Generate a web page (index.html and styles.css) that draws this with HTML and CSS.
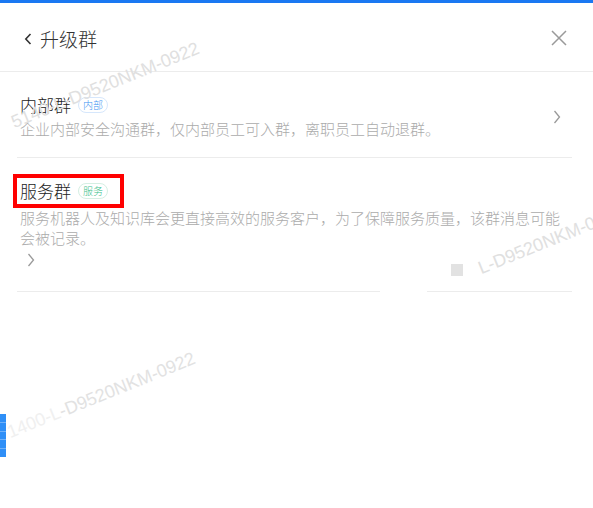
FILE: index.html
```html
<!DOCTYPE html>
<html lang="zh-CN">

<head>
    <meta charset="UTF-8">
    <meta name="viewport" content="width=device-width, initial-scale=1.0">
    <title>升级群</title>
    <link rel="stylesheet" href="styles.css">
</head>

<body>
    <div class="page">
        <div class="topbar"></div>

        <div class="header">
            <div class="header-left">
                <svg class="back" width="8" height="12" viewBox="0 0 8 12">
                    <path d="M6.5 1 L1.8 6 L6.5 11" fill="none" stroke="#333" stroke-width="1.6" />
                </svg>
                <span class="header-title">升级群</span>
            </div>
            <svg class="close" width="16" height="16" viewBox="0 0 16 16">
                <path d="M1 1 L15 15 M15 1 L1 15" fill="none" stroke="#9a9a9a" stroke-width="1.5" />
            </svg>
        </div>

        <div class="list">
            <div class="row row-inner">
                <div class="row-body">
                    <div class="row-title">
                        <span class="name">内部群</span>
                        <span class="tag tag-blue">内部</span>
                    </div>
                    <div class="desc">企业内部安全沟通群，仅内部员工可入群，离职员工自动退群。</div>
                </div>
                <svg class="arrow" width="8" height="14" viewBox="0 0 8 14">
                    <path d="M1.5 1 L6.5 7 L1.5 13" fill="none" stroke="#999" stroke-width="1.3" />
                </svg>
            </div>

            <div class="row row-service">
                <div class="row-title marked">
                    <span class="name">服务群</span>
                    <span class="tag tag-green">服务</span>
                </div>
                <div class="desc">服务机器人及知识库会更直接高效的服务客户，为了保障服务质量，该群消息可能会被记录。</div>
                <svg class="arrow arrow-below" width="8" height="14" viewBox="0 0 8 14">
                    <path d="M1.5 1 L6.5 7 L1.5 13" fill="none" stroke="#999" stroke-width="1.3" />
                </svg>
            </div>
        </div>

        <!-- 水印 -->
        <span class="watermark wm-1">5140-L-D9520NKM-0922</span>
        <span class="watermark wm-2">L-D9520NKM-0922</span>
        <span class="watermark wm-3"><span class="faint">1400-L</span>-D9520NKM-0922</span>
        <span class="wm-dot"></span>
        <span class="line-gap"></span>
        <div class="side-tab">
            <i></i><i></i><i></i><i></i>
        </div>
    </div>
</body>

</html>
```

FILE: styles.css
```css
body {
    margin: 0;
    background: #fff;
    font-family: "Noto Sans CJK SC", "Noto Sans", sans-serif;
    font-weight: 300;
}

.page {
    position: relative;
    width: 593px;
    height: 508px;
    overflow: hidden;
}

.topbar {
    height: 3px;
    background-color: #1a78f2;
}

.header {
    height: 69px;
    display: flex;
    align-items: center;
    justify-content: space-between;
    padding: 0 26px 0 24px;
    border-bottom: 1px solid #ececec;
    box-sizing: border-box;
}

.header-left {
    display: flex;
    align-items: center;
    gap: 8px;
    margin-top: 3px;
}

.header-title {
    font-size: 19px;
    line-height: 24px;
    color: #333;
}

.close {
    margin-top: 2px;
}

.list {
    margin: 0 21px 0 17px;
}

.row {
    border-bottom: 1px solid #ececec;
    padding-left: 3px;
}

.row-inner {
    display: flex;
    align-items: center;
    padding-top: 22px;
    padding-bottom: 18px;
}

.row-body {
    flex: 1;
}

.row-inner .row-title {
    margin-bottom: 3px;
}

.row-title {
    display: flex;
    align-items: center;
    height: 22px;
}

.name {
    font-size: 17px;
    line-height: 22px;
    color: #222;
}

.tag {
    margin-left: 7px;
    font-size: 10px;
    line-height: 14px;
    padding: 0 4px;
    border-radius: 8px;
    border: 1px solid;
}

.tag-blue {
    color: #3d93f2;
    border-color: #d6e7fc;
}

.tag-green {
    color: #39c08a;
    border-color: #d5efe3;
}

.desc {
    font-size: 15px;
    line-height: 20px;
    color: #ababab;
}

.arrow {
    margin-right: 11px;
    flex-shrink: 0;
}

.row-service {
    padding-top: 16px;
    padding-bottom: 24px;
}

.marked {
    width: fit-content;
    border: 4px solid #f00;
    padding: 2px 12px 2px 3px;
    margin-left: -7px;
}

.arrow-below {
    display: block;
    margin: 5px 0 0 7px;
}

.watermark {
    position: absolute;
    font-family: "Liberation Sans", sans-serif;
    font-size: 18px;
    color: #e0e0e0;
    white-space: nowrap;
    transform: rotate(-22deg);
    transform-origin: left bottom;
    pointer-events: none;
}

.wm-1 {
    left: 16px;
    top: 112px;
}

.wm-2 {
    left: 483px;
    top: 258px;
}

.wm-3 {
    left: 12px;
    top: 422px;
    color: #e2e2e2;
}

.faint {
    color: #f0f0f0;
}

.wm-dot {
    position: absolute;
    left: 451px;
    top: 264px;
    width: 12px;
    height: 12px;
    background: #e2e2e2;
}

.line-gap {
    position: absolute;
    left: 380px;
    top: 288px;
    width: 47px;
    height: 4px;
    background: #fff;
}

.side-tab {
    position: absolute;
    left: 0;
    top: 414px;
    width: 6px;
    height: 43px;
    background: #2f8ff7;
    display: flex;
    flex-direction: column;
    justify-content: space-evenly;
}

.side-tab i {
    display: block;
    height: 1px;
    background: #6fb1fa;
}
```
